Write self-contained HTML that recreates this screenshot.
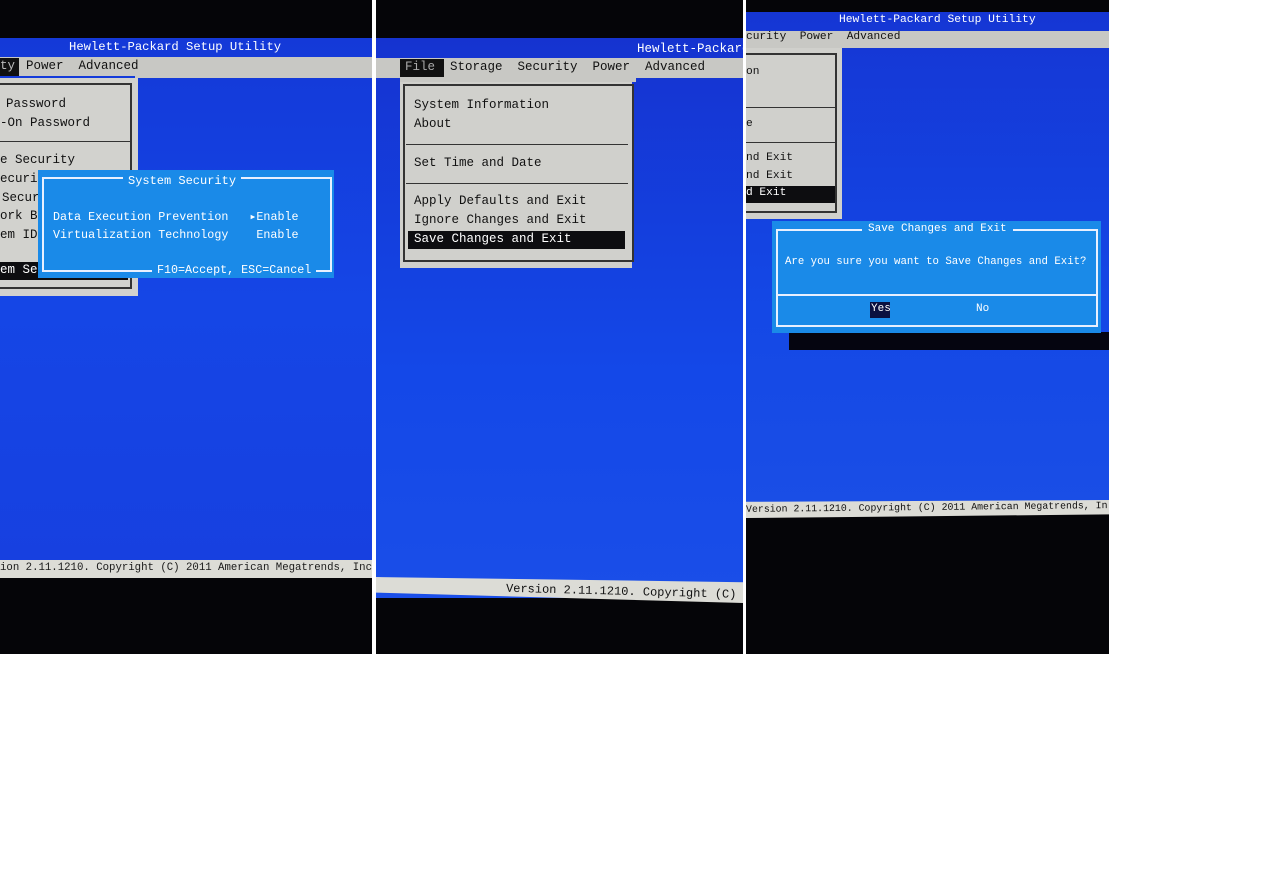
<!DOCTYPE html>
<html><head><meta charset="utf-8"><style>
*{margin:0;padding:0;box-sizing:border-box}
body{width:1274px;height:883px;background:#fff;position:relative;overflow:hidden;font-family:"Liberation Mono","DejaVu Sans Mono",monospace;font-size:12.5px}
.p{position:absolute;top:0;height:654px;overflow:hidden;background:#050508}
.a{position:absolute;white-space:pre}
.blue{background:linear-gradient(180deg,#1439d8,#1546e6 50%,#1740e0)}
.grey{background:#cfcfcb;color:#1a1a1a}
.w{color:#fff}
.k{color:#111}
.s3{font-size:11.2px}
</style></head><body>

<!-- Panel 1 -->
<div class="p" style="left:0;width:372px">
  <div class="a blue" style="left:0;top:38px;width:372px;height:530px"></div>
  <div class="a w" style="left:69px;top:40px;font-size:12.2px">Hewlett-Packard Setup Utility</div>
  <div class="a grey" style="left:0;top:57px;width:372px;height:19px;background:#c8c8c4"></div>
  <div class="a" style="left:0;top:58px;width:19px;height:18px;background:#111"></div>
  <div class="a" style="left:0;top:59px;color:#bbb;">ty</div>
  <div class="a k" style="left:26px;top:59px">Power  Advanced</div>
  <div class="a" style="left:135px;top:76px;width:237px;height:2px;background:#c8c8c4"></div>
  <div class="a grey" style="left:0;top:78px;width:138px;height:218px;background:#d2d2ce"></div>
  <div class="a" style="left:-2px;top:83px;width:134px;height:206px;border:2px solid #333"></div>
  <div class="a k" style="left:6px;top:97px">Password</div>
  <div class="a k" style="left:0;top:116px">-On Password</div>
  <div class="a" style="left:0;top:141px;width:130px;height:1px;background:#333"></div>
  <div class="a k" style="left:0;top:153px">e Security</div>
  <div class="a k" style="left:0;top:172px">ecuri</div>
  <div class="a k" style="left:2px;top:191px">Secur</div>
  <div class="a k" style="left:0;top:209px">ork Bo</div>
  <div class="a k" style="left:0;top:228px">em IDs</div>
  <div class="a" style="left:0;top:262px;width:128px;height:18px;background:#0d0d10"></div>
  <div class="a w" style="left:0;top:263px">em Sec</div>
  <div class="a" style="left:38px;top:170px;width:296px;height:108px;background:#1a8ae8"></div>
  <div class="a" style="left:42px;top:177px;width:290px;height:95px;border:2px solid #e8f0ff"></div>
  <div class="a" style="left:123px;top:174px;background:#1a8ae8;color:#fff;padding:0 5px;font-size:12px">System Security</div>
  <div class="a w" style="left:53px;top:209px;font-size:11.7px">Data Execution Prevention   ▸Enable</div>
  <div class="a w" style="left:53px;top:228px;font-size:11.7px">Virtualization Technology    Enable</div>
  <div class="a" style="left:152px;top:263px;background:#1a8ae8;color:#fff;padding:0 5px;font-size:11.7px">F10=Accept, ESC=Cancel</div>
  <div class="a grey" style="left:0;top:560px;width:372px;height:18px;background:#dcdcd6;font-size:10.7px;padding-top:2px">ion 2.11.1210. Copyright (C) 2011 American Megatrends, Inc</div>
</div>

<!-- Panel 2 -->
<div class="p" style="left:376px;width:367px">
  <div class="a blue" style="left:0;top:38px;width:367px;height:560px;background:linear-gradient(180deg,#1533d0,#1448e8 60%,#1a4ee8)"></div>
  <div class="a w" style="left:261px;top:42px;font-size:12.5px">Hewlett-Packard</div>
  <div class="a" style="left:0;top:58px;width:367px;height:20px;background:#c8c8c4"></div>
  <div class="a" style="left:24px;top:59px;width:44px;height:18px;background:#111"></div>
  <div class="a" style="left:29px;top:60px;color:#aaa">File</div>
  <div class="a k" style="left:74px;top:60px">Storage  Security  Power  Advanced</div>
  <div class="a" style="left:24px;top:78px;width:236px;height:4px;background:#c8c8c4"></div>
  <div class="a" style="left:24px;top:82px;width:232px;height:186px;background:#d0d0cc"></div>
  <div class="a" style="left:27px;top:84px;width:231px;height:178px;border:2px solid #333"></div>
  <div class="a k" style="left:38px;top:98px">System Information</div>
  <div class="a k" style="left:38px;top:117px">About</div>
  <div class="a" style="left:30px;top:144px;width:222px;height:1px;background:#333"></div>
  <div class="a k" style="left:38px;top:156px">Set Time and Date</div>
  <div class="a" style="left:30px;top:183px;width:222px;height:1px;background:#333"></div>
  <div class="a k" style="left:38px;top:194px">Apply Defaults and Exit</div>
  <div class="a k" style="left:38px;top:213px">Ignore Changes and Exit</div>
  <div class="a" style="left:32px;top:231px;width:217px;height:18px;background:#0d0d10"></div>
  <div class="a w" style="left:38px;top:232px">Save Changes and Exit</div>
  <div class="a" style="left:0;top:577px;width:367px;height:26px;background:#dcdcd6;clip-path:polygon(0 0,100% 20%,100% 100%,0 60%)"></div>
  <div class="a k" style="left:130px;top:585px;font-size:12px;transform:rotate(1.5deg)">Version 2.11.1210. Copyright (C) 20</div>
</div>

<!-- Panel 3 -->
<div class="p" style="left:746px;width:363px">
  <div class="a blue" style="left:0;top:12px;width:363px;height:498px;background:linear-gradient(180deg,#1536d4,#1448e6 60%,#1a4ee6)"></div>
  <div class="a w" style="left:93px;top:14px;font-size:11.3px">Hewlett-Packard Setup Utility</div>
  <div class="a" style="left:0;top:31px;width:363px;height:17px;background:#c8c8c4"></div>
  <div class="a k s3" style="left:0;top:31px">curity  Power  Advanced</div>
  <div class="a" style="left:0;top:48px;width:96px;height:171px;background:#d0d0cc"></div>
  <div class="a" style="left:-2px;top:53px;width:93px;height:160px;border:2px solid #333"></div>
  <div class="a k s3" style="left:0;top:66px">on</div>
  <div class="a" style="left:0;top:107px;width:89px;height:1px;background:#333"></div>
  <div class="a k s3" style="left:0;top:118px">e</div>
  <div class="a" style="left:0;top:142px;width:89px;height:1px;background:#333"></div>
  <div class="a k s3" style="left:0;top:152px">nd Exit</div>
  <div class="a k s3" style="left:0;top:170px">nd Exit</div>
  <div class="a" style="left:0;top:186px;width:89px;height:17px;background:#0d0d10"></div>
  <div class="a w s3" style="left:0;top:187px">d Exit</div>
  <div class="a" style="left:43px;top:332px;width:320px;height:18px;background:#050510"></div>
  <div class="a" style="left:26px;top:221px;width:329px;height:112px;background:#1a8ae8"></div>
  <div class="a" style="left:30px;top:229px;width:322px;height:98px;border:2px solid #e8f0ff"></div>
  <div class="a" style="left:30px;top:294px;width:322px;height:2px;background:#e8f0ff"></div>
  <div class="a" style="left:116px;top:223px;background:#1a8ae8;color:#fff;padding:0 6px;font-size:11px">Save Changes and Exit</div>
  <div class="a w" style="left:39px;top:256px;font-size:10.7px">Are you sure you want to Save Changes and Exit?</div>
  <div class="a" style="left:124px;top:302px;width:20px;height:16px;background:#0a1040"></div>
  <div class="a w" style="left:125px;top:303px;font-size:11px">Yes</div>
  <div class="a w" style="left:230px;top:303px;font-size:11px">No</div>
  <div class="a" style="left:0;top:500px;width:363px;height:18px;background:#dcdcd6;clip-path:polygon(0 10%,100% 0,100% 80%,0 100%)"></div>
  <div class="a k" style="left:0;top:502px;font-size:9.9px;transform:rotate(-0.6deg)">Version 2.11.1210. Copyright (C) 2011 American Megatrends, In</div>
</div>
</body></html>
